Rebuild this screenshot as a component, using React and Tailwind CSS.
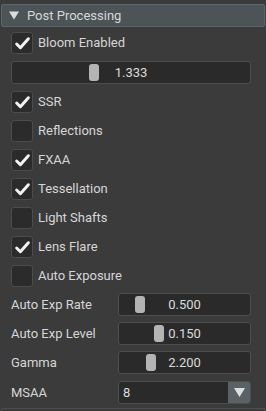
const checks = [
  { label: "SSR", on: true },
  { label: "Reflections", on: false },
  { label: "FXAA", on: true },
  { label: "Tessellation", on: true },
  { label: "Light Shafts", on: false },
  { label: "Lens Flare", on: true },
  { label: "Auto Exposure", on: false },
];

const sliders = [
  { label: "Auto Exp Rate", value: "0.500", pos: 16 },
  { label: "Auto Exp Level", value: "0.150", pos: 35 },
  { label: "Gamma", value: "2.200", pos: 27 },
];

function Checkbox({ label, on }) {
  return (
    <div className="flex items-center h-[22px]">
      <div className="w-[22px] h-[22px] rounded-[3px] bg-[#2b2b2b] border border-[#4c4c4c] flex items-center justify-center">
        {on && (
          <svg width="17" height="17" viewBox="0 0 16 16">
            <path d="M2.5 8.5 L6 12 L13.5 3.5" fill="none" stroke="#f2f2f2" strokeWidth="2.8" strokeLinecap="round" strokeLinejoin="round" />
          </svg>
        )}
      </div>
      <span className="ml-[5px] text-[13px] text-[#d6d6d6]">{label}</span>
    </div>
  );
}

function Slider({ value, pos, className }) {
  return (
    <div className={"relative h-[23px] rounded-[3px] bg-[#2a2a2a] border border-[#4e4e4e] flex items-center justify-center " + className}>
      <div className="absolute top-[2px] w-[10px] h-[17px] rounded-[3px] bg-[#b4b4b4]" style={{ left: pos }} />
      <span className="relative text-[13px] text-[#dadada]">{value}</span>
    </div>
  );
}

export default function App() {
  return (
    <div className="w-[266px] h-[411px] bg-[#3b3b3b] overflow-hidden" style={{ fontFamily: "Roboto, 'Liberation Sans', sans-serif" }}>
      <div className="mx-px mt-1 h-[23px] bg-[#4c5458] border border-[#5d6569] rounded-[2px] flex items-center">
        <svg width="10" height="9" viewBox="0 0 11 9" className="ml-[7px]">
          <path d="M0 0 H11 L5.5 9 Z" fill="#d8dcde" />
        </svg>
        <span className="ml-[8px] text-[13px] text-[#d4d8da]">Post Processing</span>
      </div>

      <div className="px-[11px] pt-[5px] flex flex-col gap-[7px]">
        <Checkbox label="Bloom Enabled" on />
        <Slider value="1.333" pos={77} className="w-[240px]" />
        {checks.map((c) => (
          <Checkbox key={c.label} label={c.label} on={c.on} />
        ))}
        {sliders.map((s) => (
          <div key={s.label} className="flex items-center -mt-[1px] first:mt-0">
            <span className="w-[107px] text-[13px] text-[#d6d6d6]">{s.label}</span>
            <Slider value={s.value} pos={s.pos} className="w-[133px]" />
          </div>
        ))}
        <div className="flex items-center">
          <span className="w-[107px] text-[13px] text-[#d6d6d6]">MSAA</span>
          <div className="w-[133px] h-[23px] rounded-[3px] bg-[#2a2a2a] border border-[#4e4e4e] flex items-center overflow-hidden">
            <span className="flex-1 pl-[4px] text-[13px] text-[#dadada]">8</span>
            <div className="w-[22px] h-full bg-[#5a6266] flex items-center justify-center">
              <svg width="11" height="9" viewBox="0 0 11 9">
                <path d="M0 0 H11 L5.5 9 Z" fill="#dcdfe0" />
              </svg>
            </div>
          </div>
        </div>
      </div>
      <div className="mt-[4px] mx-px h-[4px] border-t border-x border-[#4e4e4e] rounded-t-[2px]" />
    </div>
  );
}
